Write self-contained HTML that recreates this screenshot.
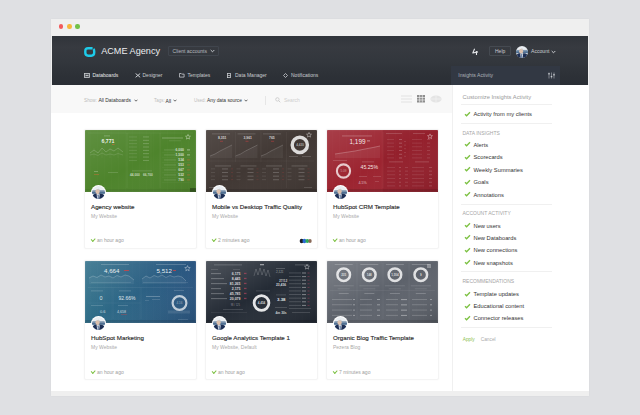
<!DOCTYPE html>
<html><head><meta charset="utf-8">
<style>
*{margin:0;padding:0;box-sizing:border-box}
html,body{width:640px;height:415px;overflow:hidden;background:#dfe0e3;font-family:"Liberation Sans",sans-serif}
.a{position:absolute}
.t{position:absolute;white-space:nowrap;line-height:1}
#win{left:51px;top:19px;width:538px;height:377px;background:#efefef;box-shadow:0 0 1.5px rgba(0,0,0,.06)}
.dot{position:absolute;width:4.4px;height:4.4px;border-radius:50%;top:24.4px}
#hdr{left:52px;top:36px;width:536px;height:49px;background:linear-gradient(#30343a 0%,#373a40 22%,#33373d 50%,#2d3137 80%,#2a2e35 100%)}
#filt{left:51px;top:85px;width:401px;height:28px;background:#f8f8f8}
#content{left:51px;top:113px;width:401px;height:278px;background:#fff}
#side{left:452px;top:85px;width:137px;height:306px;background:#fff;border-left:1px solid #f0f0f0}
#ins{left:451px;top:66px;width:109px;height:19px;background:#323843}
.nav{color:#c9ccd0;font-size:5px}
.card{position:absolute;width:113px;height:120px;background:#fff;border:1px solid #f4f4f4;border-radius:2px;box-shadow:0 0 2px rgba(0,0,0,.04)}
.thumb{position:absolute;left:0;top:0;width:111px;height:62px;border-radius:1px 1px 0 0;overflow:hidden}

.av{position:absolute;left:6px;top:55px;width:15px;height:15px;border-radius:50%;background:#fff;padding:1px}
.av svg{display:block;width:13px;height:13px}
.ct{position:absolute;left:6px;top:73.7px;font-size:6.2px;color:#2e2e2e;white-space:nowrap;line-height:1;-webkit-text-stroke:.15px #2e2e2e}
.cs{position:absolute;left:6px;top:83.5px;font-size:5px;color:#a9a9a9;white-space:nowrap;line-height:1}
.cf{position:absolute;left:6px;top:108px;font-size:5px;color:#9d9d9d;white-space:nowrap;line-height:1}
.chk{display:inline-block;width:4px;height:2.5px;border-left:1.2px solid #7cc142;border-bottom:1.2px solid #7cc142;transform:rotate(-45deg);margin-right:2px;vertical-align:1.8px}
.si{position:absolute;left:12px;font-size:5.75px;color:#333;white-space:nowrap;line-height:1}
.sl{position:absolute;left:10px;font-size:5px;color:#a0a0a0;white-space:nowrap;line-height:1}
.dv{position:absolute;left:9px;width:91px;height:1px;background:#ececec}
.sc{position:absolute;left:-1px;top:0;width:5px;height:3px;border-left:1.2px solid #7cc142;border-bottom:1.2px solid #7cc142;transform:rotate(-45deg)}
</style></head><body>
<svg width="0" height="0" style="position:absolute"><defs><clipPath id="avc"><circle cx="10" cy="10" r="10"/></clipPath>
<linearGradient id="sheen" x1="0" y1="0" x2="1" y2="1"><stop offset="0" stop-color="#fff" stop-opacity="1"/><stop offset=".5" stop-color="#fff" stop-opacity="0"/><stop offset="1" stop-color="#000" stop-opacity=".8"/></linearGradient>
<symbol id="avs" viewBox="0 0 20 20"><g clip-path="url(#avc)"><rect width="20" height="20" fill="#e9edf1"/><rect y="6.5" width="20" height="5" fill="#7f97b0"/><rect y="9" width="20" height="3" fill="#4f6f92"/><ellipse cx="8.6" cy="8.6" rx="3.3" ry="4" fill="#dcc0ad"/><path d="M8 5 Q9 3.6 11.5 4.6 L11.5 6.5 Q9.5 5.4 8 6.4Z" fill="#c9c9c9"/><path d="M0 20 L1.5 14 Q4 11.5 7 12 L9.5 16 L12 12 Q16 11.5 18.5 14 L20 20Z" fill="#1d2f55"/><path d="M7 12 L9.5 16 L12 12 L11 20 L8 20Z" fill="#e7ebf0"/><path d="M9 13 L10 13 L10.3 20 L8.8 20Z" fill="#3a5a8a"/></g></symbol></defs></svg>
<div id="win" class="a"></div>
<div class="dot" style="left:58.8px;background:#f25a5c"></div>
<div class="dot" style="left:67.2px;background:#f6b73c"></div>
<div class="dot" style="left:75.4px;background:#72c148"></div>

<div id="hdr" class="a"></div>
<!-- logo -->
<svg class="a" style="left:83px;top:45.6px" width="14" height="12" viewBox="0 0 14 12">
<path d="M9.6 2.3 H5.2 Q2.3 2.3 2.3 5.2 V6.8 Q2.3 9.7 5.2 9.7 H8.3 Q11.2 9.7 11.2 6.8 V5.2 Q11.2 3.6 10.4 3" fill="none" stroke="#1ecbe9" stroke-width="2.4"/>
</svg>
<div class="t" style="left:101.2px;top:47.4px;font-size:9.15px;color:#eceef0">ACME Agency</div>
<div class="a" style="left:168px;top:46px;width:51px;height:10px;border:1px solid #40454d;border-radius:1px"></div>
<div class="t" style="left:172.5px;top:48.5px;font-size:5.05px;color:#b6babf">Client accounts</div>
<svg class="a" style="left:210px;top:49px" width="5" height="4" viewBox="0 0 5 4"><path d="M.7 1 L2.5 2.8 L4.3 1" fill="none" stroke="#c4c7cb" stroke-width="1"/></svg>

<!-- nav -->
<div class="t nav" style="left:92.5px;top:72.9px;color:#e6e8ea">Databoards</div>
<div class="t nav" style="left:142.5px;top:72.9px">Designer</div>
<div class="t nav" style="left:187.5px;top:72.9px">Templates</div>
<div class="t nav" style="left:235px;top:72.9px">Data Manager</div>
<div class="t nav" style="left:291px;top:72.9px">Notifications</div>

<!-- header right -->
<div class="a" style="left:489px;top:46px;width:22px;height:10px;border:1px solid #454a51;border-radius:1px"></div>
<div class="t" style="left:495px;top:48.5px;font-size:5px;color:#c9ccd0">Help</div>
<svg class="a" style="left:516px;top:46px" width="12" height="12"><use href="#avs"/></svg>
<div class="t" style="left:531px;top:49.1px;font-size:5.1px;color:#c9ccd0">Account</div>
<svg class="a" style="left:550.5px;top:49.6px" width="5" height="4" viewBox="0 0 5 4"><path d="M.7 1 L2.5 2.8 L4.3 1" fill="none" stroke="#c9ccd0" stroke-width="1"/></svg>

<div id="ins" class="a"></div>
<div class="t" style="left:458.3px;top:73.4px;font-size:5.1px;color:#aeb3ba">Insights Activity</div>

<div id="filt" class="a"></div>
<div id="content" class="a"></div>
<div id="side" class="a"></div>

<!-- filter -->
<div class="t" style="left:84px;top:98.8px;font-size:4.7px;color:#bdbdbd">Show:</div>
<div class="t" style="left:98.4px;top:98.8px;font-size:4.97px;color:#333">All Databoards</div>
<div class="t" style="left:154px;top:98.8px;font-size:4.5px;color:#bdbdbd">Tags:</div>
<div class="t" style="left:165.6px;top:98.8px;font-size:5px;color:#333">All</div>
<div class="t" style="left:194px;top:98.8px;font-size:4.5px;color:#bdbdbd">Used:</div>
<div class="t" style="left:207px;top:98.8px;font-size:4.84px;color:#333">Any data source</div>
<div class="t" style="left:284px;top:98.3px;font-size:5px;color:#cfcfcf">Search</div>


<!-- nav icons -->
<svg class="a" style="left:84px;top:73.2px" width="6" height="5" viewBox="0 0 6 5"><rect x=".45" y=".45" width="5" height="4" fill="#c9ccd0" fill-opacity=".25" stroke="#c9ccd0" stroke-width=".8"/><path d="M1.6 2.5 H4.4" stroke="#d5d8db" stroke-width=".8"/></svg>
<svg class="a" style="left:134.7px;top:73.4px" width="6" height="5" viewBox="0 0 6 5"><path d="M.6 .5 L5.2 4.3 M5.2 .5 L.6 4.3" stroke="#c9ccd0" stroke-width="1"/></svg>
<svg class="a" style="left:179.2px;top:73.4px" width="6" height="5" viewBox="0 0 6 5"><path d="M.45 .5 H2.2 L2.7 1.1 H5.1 V4.1 H.45 Z" fill="none" stroke="#c9ccd0" stroke-width=".8"/></svg>
<svg class="a" style="left:227px;top:73.3px" width="4" height="5" viewBox="0 0 4 5"><rect x=".5" y=".4" width="3" height="4.2" fill="none" stroke="#c9ccd0" stroke-width=".8"/><path d="M.5 2.5 H3.5" stroke="#c9ccd0" stroke-width=".7"/></svg>
<svg class="a" style="left:282.8px;top:73.3px" width="5" height="5" viewBox="0 0 5 5"><path d="M2.5 .5 L4.5 2.5 L2.5 4.5 L.5 2.5 Z" fill="none" stroke="#c9ccd0" stroke-width=".8"/></svg>
<!-- activity icon -->
<svg class="a" style="left:471.5px;top:47.5px" width="8" height="8" viewBox="0 0 8 8"><path d="M2.6 .8 L.8 5 L6 3.9" fill="none" stroke="#e2e4e7" stroke-width="1.1" stroke-linejoin="round"/><path d="M4.4 3 L4.5 7.1" stroke="#e2e4e7" stroke-width="1.1"/></svg>
<!-- sliders icon -->
<svg class="a" style="left:547.5px;top:72px" width="7" height="7" viewBox="0 0 7 7"><path d="M1 0.5 V6.5 M3.5 0.5 V6.5 M6 0.5 V6.5" stroke="#aeb3ba" stroke-width=".6"/><rect x=".2" y="1.2" width="1.6" height="1.2" fill="#c5c9ce"/><rect x="2.7" y="4" width="1.6" height="1.2" fill="#c5c9ce"/><rect x="5.2" y="2.2" width="1.6" height="1.2" fill="#c5c9ce"/></svg>
<!-- filter chevrons -->
<svg class="a" style="left:133.8px;top:99px" width="4" height="3" viewBox="0 0 4 3"><path d="M.5 .7 L2 2.2 L3.5 .7" fill="none" stroke="#444" stroke-width=".8"/></svg>
<svg class="a" style="left:173.4px;top:99px" width="4" height="3" viewBox="0 0 4 3"><path d="M.5 .7 L2 2.2 L3.5 .7" fill="none" stroke="#444" stroke-width=".8"/></svg>
<svg class="a" style="left:243.9px;top:99px" width="4" height="3" viewBox="0 0 4 3"><path d="M.5 .7 L2 2.2 L3.5 .7" fill="none" stroke="#444" stroke-width=".8"/></svg>
<div class="a" style="left:265px;top:96px;width:1px;height:9px;background:#e6e6e6"></div>
<svg class="a" style="left:275px;top:97px" width="6" height="6" viewBox="0 0 6 6"><circle cx="2.4" cy="2.4" r="1.7" fill="none" stroke="#c8c8c8" stroke-width=".8"/><path d="M3.6 3.6 L5.3 5.3" stroke="#c8c8c8" stroke-width=".9"/></svg>
<!-- view toggles -->
<svg class="a" style="left:401px;top:95px" width="11" height="8" viewBox="0 0 11 8"><path d="M0 1 H11 M0 4 H11 M0 7 H11" stroke="#dcdcdc" stroke-width=".8"/></svg>
<svg class="a" style="left:417px;top:95px" width="8" height="7.5" viewBox="0 0 8 7.5"><rect x="0" y="0" width="8" height="7.5" fill="#8d8d8d"/><path d="M2.65 0 V7.5 M5.35 0 V7.5 M0 2.5 H8 M0 5 H8" stroke="#f8f8f8" stroke-width=".6"/></svg>
<svg class="a" style="left:429.5px;top:94.5px" width="12" height="8" viewBox="0 0 12 8"><ellipse cx="6" cy="4" rx="5.6" ry="3.5" fill="#e4e4e4"/><path d="M6 .5 V7.5 M1 4 H11" stroke="#f4f4f4" stroke-width=".7"/></svg>

<!-- cards -->
<div class="card" style="left:84px;top:129px">
  <div class="thumb"><svg width="111" height="62" viewBox="0 0 111 62" style="display:block"><rect width="111" height="62" fill="#4e842c"/><rect width="111" height="62" fill="url(#sheen)" opacity="0.1"/><g><path d="M2 0 L2 62" stroke="#fff" stroke-opacity="0.035" stroke-width="0.35"/><path d="M5.5 0 L5.5 62" stroke="#fff" stroke-opacity="0.035" stroke-width="0.35"/><path d="M9.0 0 L9.0 62" stroke="#fff" stroke-opacity="0.035" stroke-width="0.35"/><path d="M12.5 0 L12.5 62" stroke="#fff" stroke-opacity="0.035" stroke-width="0.35"/><path d="M16.0 0 L16.0 62" stroke="#fff" stroke-opacity="0.035" stroke-width="0.35"/><path d="M19.5 0 L19.5 62" stroke="#fff" stroke-opacity="0.035" stroke-width="0.35"/><path d="M23.0 0 L23.0 62" stroke="#fff" stroke-opacity="0.035" stroke-width="0.35"/><path d="M26.5 0 L26.5 62" stroke="#fff" stroke-opacity="0.035" stroke-width="0.35"/><path d="M30.0 0 L30.0 62" stroke="#fff" stroke-opacity="0.035" stroke-width="0.35"/><path d="M33.5 0 L33.5 62" stroke="#fff" stroke-opacity="0.035" stroke-width="0.35"/><path d="M37.0 0 L37.0 62" stroke="#fff" stroke-opacity="0.035" stroke-width="0.35"/><path d="M40.5 0 L40.5 62" stroke="#fff" stroke-opacity="0.035" stroke-width="0.35"/><path d="M44.0 0 L44.0 62" stroke="#fff" stroke-opacity="0.035" stroke-width="0.35"/><path d="M47.5 0 L47.5 62" stroke="#fff" stroke-opacity="0.035" stroke-width="0.35"/><path d="M51.0 0 L51.0 62" stroke="#fff" stroke-opacity="0.035" stroke-width="0.35"/><path d="M54.5 0 L54.5 62" stroke="#fff" stroke-opacity="0.035" stroke-width="0.35"/><path d="M58.0 0 L58.0 62" stroke="#fff" stroke-opacity="0.035" stroke-width="0.35"/><path d="M61.5 0 L61.5 62" stroke="#fff" stroke-opacity="0.035" stroke-width="0.35"/><path d="M65.0 0 L65.0 62" stroke="#fff" stroke-opacity="0.035" stroke-width="0.35"/><path d="M68.5 0 L68.5 62" stroke="#fff" stroke-opacity="0.035" stroke-width="0.35"/><path d="M72.0 0 L72.0 62" stroke="#fff" stroke-opacity="0.035" stroke-width="0.35"/><path d="M75.5 0 L75.5 62" stroke="#fff" stroke-opacity="0.035" stroke-width="0.35"/><path d="M79.0 0 L79.0 62" stroke="#fff" stroke-opacity="0.035" stroke-width="0.35"/><path d="M82.5 0 L82.5 62" stroke="#fff" stroke-opacity="0.035" stroke-width="0.35"/><path d="M86.0 0 L86.0 62" stroke="#fff" stroke-opacity="0.035" stroke-width="0.35"/><path d="M89.5 0 L89.5 62" stroke="#fff" stroke-opacity="0.035" stroke-width="0.35"/><path d="M93.0 0 L93.0 62" stroke="#fff" stroke-opacity="0.035" stroke-width="0.35"/><path d="M96.5 0 L96.5 62" stroke="#fff" stroke-opacity="0.035" stroke-width="0.35"/><path d="M100.0 0 L100.0 62" stroke="#fff" stroke-opacity="0.035" stroke-width="0.35"/><path d="M103.5 0 L103.5 62" stroke="#fff" stroke-opacity="0.035" stroke-width="0.35"/><path d="M107.0 0 L107.0 62" stroke="#fff" stroke-opacity="0.035" stroke-width="0.35"/><path d="M110.5 0 L110.5 62" stroke="#fff" stroke-opacity="0.035" stroke-width="0.35"/><rect x="0.8" y="0.8" width="109.4" height="60.4" fill="none" stroke="#fff" stroke-opacity="0.1" stroke-width="0.6"/><rect x="0" y="59" width="111" height="3" fill="#000" fill-opacity="0.05"/><path d="M42 3 L42 58" stroke="#fff" stroke-opacity="0.12" stroke-width="0.5"/><path d="M75 3 L75 58" stroke="#fff" stroke-opacity="0.1" stroke-width="0.5"/><path d="M3 3 L108 3" stroke="#fff" stroke-opacity="0.12" stroke-width="0.5"/><rect x="19" y="5.5" width="6" height="0.8" fill="#fff" fill-opacity="0.3"/><text x="16.5" y="13" font-family="Liberation Sans" font-size="5.2" font-weight="700" fill="#fff" fill-opacity="0.9" text-anchor="start">6,771</text><rect x="27" y="14" width="2.5" height="0.8" fill="#e36a3a" fill-opacity="0.7"/><path d="M5 23 L9 20 L13 23 L17 18 L21 22 L25 19 L29 21 L33 18 L38 22" fill="none" stroke="#fff" stroke-opacity="0.3" stroke-width="0.6"/><path d="M5 25 L9 24 L13 25.5 L17 23 L21 25 L25 24 L29 25 L33 23.5 L38 25" fill="none" stroke="#fff" stroke-opacity="0.2" stroke-width="0.6"/><path d="M9 18 L9 28" stroke="#fff" stroke-opacity="0.08" stroke-width="0.5"/><path d="M17 18 L17 28" stroke="#fff" stroke-opacity="0.08" stroke-width="0.5"/><path d="M25 18 L25 28" stroke="#fff" stroke-opacity="0.08" stroke-width="0.5"/><path d="M33 18 L33 28" stroke="#fff" stroke-opacity="0.08" stroke-width="0.5"/><rect x="44" y="6.5" width="8" height="0.9" fill="#fff" fill-opacity="0.12"/><rect x="44" y="9.85" width="8" height="0.9" fill="#fff" fill-opacity="0.12"/><rect x="44" y="13.2" width="8" height="0.9" fill="#fff" fill-opacity="0.12"/><rect x="44" y="16.55" width="8" height="0.9" fill="#fff" fill-opacity="0.12"/><rect x="44" y="19.9" width="8" height="0.9" fill="#fff" fill-opacity="0.12"/><rect x="44" y="23.25" width="8" height="0.9" fill="#fff" fill-opacity="0.12"/><rect x="44" y="26.6" width="8" height="0.9" fill="#fff" fill-opacity="0.12"/><rect x="44" y="29.95" width="8" height="0.9" fill="#fff" fill-opacity="0.12"/><rect x="58" y="6.5" width="6" height="0.9" fill="#fff" fill-opacity="0.22"/><rect x="58" y="9.85" width="6" height="0.9" fill="#fff" fill-opacity="0.22"/><rect x="58" y="13.2" width="6" height="0.9" fill="#fff" fill-opacity="0.22"/><rect x="58" y="16.55" width="6" height="0.9" fill="#fff" fill-opacity="0.22"/><rect x="58" y="19.9" width="6" height="0.9" fill="#fff" fill-opacity="0.22"/><rect x="58" y="23.25" width="6" height="0.9" fill="#fff" fill-opacity="0.22"/><rect x="58" y="26.6" width="6" height="0.9" fill="#fff" fill-opacity="0.22"/><rect x="58" y="29.95" width="6" height="0.9" fill="#fff" fill-opacity="0.22"/><path d="M66 3 L66 58" stroke="#fff" stroke-opacity="0.06" stroke-width="0.5"/><rect x="77" y="7.5" width="21" height="1" fill="#fff" fill-opacity="0.28"/><rect x="84" y="10.5" width="12" height="0.7" fill="#fff" fill-opacity="0.15"/><path d="M103.0 4.4 L103.69 6.05 L105.47 6.2 L104.11 7.36 L104.53 9.1 L103.0 8.17 L101.47 9.1 L101.89 7.36 L100.53 6.2 L102.31 6.05Z" fill="none" stroke="#fff" stroke-opacity="0.6" stroke-width="0.6"/><rect x="79" y="19.5" width="12" height="0.9" fill="#fff" fill-opacity="0.15"/><text x="99" y="21" font-family="Liberation Sans" font-size="3.4" font-weight="700" fill="#fff" fill-opacity="0.75" text-anchor="end">6,000</text><rect x="102" y="19.4" width="3" height="1" fill="#fff" fill-opacity="0.45"/><path d="M77 22.5 L106 22.5" stroke="#fff" stroke-opacity="0.06" stroke-width="0.5"/><rect x="79" y="24.5" width="12" height="0.9" fill="#fff" fill-opacity="0.15"/><text x="99" y="26" font-family="Liberation Sans" font-size="3.4" font-weight="700" fill="#fff" fill-opacity="0.75" text-anchor="end">1,500</text><rect x="102" y="24.4" width="3" height="1" fill="#fff" fill-opacity="0.45"/><path d="M77 27.5 L106 27.5" stroke="#fff" stroke-opacity="0.06" stroke-width="0.5"/><rect x="79" y="29.5" width="12" height="0.9" fill="#fff" fill-opacity="0.15"/><text x="99" y="31" font-family="Liberation Sans" font-size="3.4" font-weight="700" fill="#fff" fill-opacity="0.75" text-anchor="end">534</text><rect x="102" y="29.4" width="3" height="1" fill="#e36a3a" fill-opacity="0.45"/><path d="M77 32.5 L106 32.5" stroke="#fff" stroke-opacity="0.06" stroke-width="0.5"/><rect x="79" y="34.5" width="12" height="0.9" fill="#fff" fill-opacity="0.15"/><text x="99" y="36" font-family="Liberation Sans" font-size="3.4" font-weight="700" fill="#fff" fill-opacity="0.75" text-anchor="end">553</text><rect x="102" y="34.4" width="3" height="1" fill="#e36a3a" fill-opacity="0.45"/><path d="M77 37.5 L106 37.5" stroke="#fff" stroke-opacity="0.06" stroke-width="0.5"/><rect x="79" y="39.5" width="12" height="0.9" fill="#fff" fill-opacity="0.15"/><text x="99" y="41" font-family="Liberation Sans" font-size="3.4" font-weight="700" fill="#fff" fill-opacity="0.75" text-anchor="end">667</text><rect x="102" y="39.4" width="3" height="1" fill="#e36a3a" fill-opacity="0.45"/><path d="M77 42.5 L106 42.5" stroke="#fff" stroke-opacity="0.06" stroke-width="0.5"/><rect x="79" y="44.5" width="12" height="0.9" fill="#fff" fill-opacity="0.15"/><text x="99" y="46" font-family="Liberation Sans" font-size="3.4" font-weight="700" fill="#fff" fill-opacity="0.75" text-anchor="end">532</text><rect x="102" y="44.4" width="3" height="1" fill="#e36a3a" fill-opacity="0.45"/><path d="M77 47.5 L106 47.5" stroke="#fff" stroke-opacity="0.06" stroke-width="0.5"/><rect x="79" y="49.5" width="12" height="0.9" fill="#fff" fill-opacity="0.15"/><text x="99" y="51" font-family="Liberation Sans" font-size="3.4" font-weight="700" fill="#fff" fill-opacity="0.75" text-anchor="end">790</text><rect x="102" y="49.4" width="3" height="1" fill="#e36a3a" fill-opacity="0.45"/><path d="M77 52.5 L106 52.5" stroke="#fff" stroke-opacity="0.06" stroke-width="0.5"/><text x="45" y="45.5" font-family="Liberation Sans" font-size="3.2" font-weight="700" fill="#fff" fill-opacity="0.65" text-anchor="start">44,000</text><text x="58" y="45.5" font-family="Liberation Sans" font-size="3.2" font-weight="700" fill="#fff" fill-opacity="0.65" text-anchor="start">66,700</text><rect x="47" y="40.5" width="20" height="0.8" fill="#fff" fill-opacity="0.18"/><rect x="9" y="41" width="4" height="1" fill="#fff" fill-opacity="0.25"/><rect x="9" y="44" width="5" height="1" fill="#e36a3a" fill-opacity="0.4"/><rect x="23" y="42" width="10" height="0.8" fill="#fff" fill-opacity="0.18"/><rect x="105" y="58" width="6" height="4" fill="#000" fill-opacity="0.3"/></g></svg></div>
  <div class="av"><svg><use href="#avs"/></svg></div>
  <div class="ct">Agency website</div>
  <div class="cs">My Website</div>
  <div class="cf"><span class="chk"></span>an hour ago</div>
</div>
<div class="card" style="left:205px;top:129px">
  <div class="thumb"><svg width="111" height="62" viewBox="0 0 111 62" style="display:block"><rect width="111" height="62" fill="#413834"/><rect width="111" height="62" fill="url(#sheen)" opacity="0.1"/><g><path d="M2 0 L2 62" stroke="#fff" stroke-opacity="0.03" stroke-width="0.35"/><path d="M5.5 0 L5.5 62" stroke="#fff" stroke-opacity="0.03" stroke-width="0.35"/><path d="M9.0 0 L9.0 62" stroke="#fff" stroke-opacity="0.03" stroke-width="0.35"/><path d="M12.5 0 L12.5 62" stroke="#fff" stroke-opacity="0.03" stroke-width="0.35"/><path d="M16.0 0 L16.0 62" stroke="#fff" stroke-opacity="0.03" stroke-width="0.35"/><path d="M19.5 0 L19.5 62" stroke="#fff" stroke-opacity="0.03" stroke-width="0.35"/><path d="M23.0 0 L23.0 62" stroke="#fff" stroke-opacity="0.03" stroke-width="0.35"/><path d="M26.5 0 L26.5 62" stroke="#fff" stroke-opacity="0.03" stroke-width="0.35"/><path d="M30.0 0 L30.0 62" stroke="#fff" stroke-opacity="0.03" stroke-width="0.35"/><path d="M33.5 0 L33.5 62" stroke="#fff" stroke-opacity="0.03" stroke-width="0.35"/><path d="M37.0 0 L37.0 62" stroke="#fff" stroke-opacity="0.03" stroke-width="0.35"/><path d="M40.5 0 L40.5 62" stroke="#fff" stroke-opacity="0.03" stroke-width="0.35"/><path d="M44.0 0 L44.0 62" stroke="#fff" stroke-opacity="0.03" stroke-width="0.35"/><path d="M47.5 0 L47.5 62" stroke="#fff" stroke-opacity="0.03" stroke-width="0.35"/><path d="M51.0 0 L51.0 62" stroke="#fff" stroke-opacity="0.03" stroke-width="0.35"/><path d="M54.5 0 L54.5 62" stroke="#fff" stroke-opacity="0.03" stroke-width="0.35"/><path d="M58.0 0 L58.0 62" stroke="#fff" stroke-opacity="0.03" stroke-width="0.35"/><path d="M61.5 0 L61.5 62" stroke="#fff" stroke-opacity="0.03" stroke-width="0.35"/><path d="M65.0 0 L65.0 62" stroke="#fff" stroke-opacity="0.03" stroke-width="0.35"/><path d="M68.5 0 L68.5 62" stroke="#fff" stroke-opacity="0.03" stroke-width="0.35"/><path d="M72.0 0 L72.0 62" stroke="#fff" stroke-opacity="0.03" stroke-width="0.35"/><path d="M75.5 0 L75.5 62" stroke="#fff" stroke-opacity="0.03" stroke-width="0.35"/><path d="M79.0 0 L79.0 62" stroke="#fff" stroke-opacity="0.03" stroke-width="0.35"/><path d="M82.5 0 L82.5 62" stroke="#fff" stroke-opacity="0.03" stroke-width="0.35"/><path d="M86.0 0 L86.0 62" stroke="#fff" stroke-opacity="0.03" stroke-width="0.35"/><path d="M89.5 0 L89.5 62" stroke="#fff" stroke-opacity="0.03" stroke-width="0.35"/><path d="M93.0 0 L93.0 62" stroke="#fff" stroke-opacity="0.03" stroke-width="0.35"/><path d="M96.5 0 L96.5 62" stroke="#fff" stroke-opacity="0.03" stroke-width="0.35"/><path d="M100.0 0 L100.0 62" stroke="#fff" stroke-opacity="0.03" stroke-width="0.35"/><path d="M103.5 0 L103.5 62" stroke="#fff" stroke-opacity="0.03" stroke-width="0.35"/><path d="M107.0 0 L107.0 62" stroke="#fff" stroke-opacity="0.03" stroke-width="0.35"/><path d="M110.5 0 L110.5 62" stroke="#fff" stroke-opacity="0.03" stroke-width="0.35"/><rect x="0.8" y="0.8" width="109.4" height="60.4" fill="none" stroke="#fff" stroke-opacity="0.08" stroke-width="0.6"/><rect x="0" y="59" width="111" height="3" fill="#000" fill-opacity="0.12"/><rect x="6.0" y="3.5" width="18" height="0.8" fill="#fff" fill-opacity="0.2"/><text x="12.0" y="9.2" font-family="Liberation Sans" font-size="3.4" font-weight="700" fill="#fff" fill-opacity="0.75" text-anchor="start">8,351</text><rect x="14.0" y="10.8" width="3" height="0.9" fill="#e04040" fill-opacity="0.5"/><path d="M4.0 26 L9.0 24 L14.0 21 L19.0 18.5 L26.0 15 L26.0 28 L4.0 28Z" fill="#fff" fill-opacity="0.05"/><path d="M4.0 26 L9.0 24 L14.0 21 L19.0 18.5 L26.0 15" fill="none" stroke="#fff" stroke-opacity="0.25" stroke-width="0.7"/><rect x="31.5" y="3.5" width="18" height="0.8" fill="#fff" fill-opacity="0.2"/><text x="37.5" y="9.2" font-family="Liberation Sans" font-size="3.4" font-weight="700" fill="#fff" fill-opacity="0.75" text-anchor="start">3,961</text><rect x="39.5" y="10.8" width="3" height="0.9" fill="#e04040" fill-opacity="0.5"/><path d="M29.5 26 L34.5 24 L39.5 21 L44.5 18.5 L51.5 15 L51.5 28 L29.5 28Z" fill="#fff" fill-opacity="0.05"/><path d="M29.5 26 L34.5 24 L39.5 21 L44.5 18.5 L51.5 15" fill="none" stroke="#fff" stroke-opacity="0.25" stroke-width="0.7"/><rect x="57.0" y="3.5" width="18" height="0.8" fill="#fff" fill-opacity="0.2"/><text x="63.0" y="9.2" font-family="Liberation Sans" font-size="3.4" font-weight="700" fill="#fff" fill-opacity="0.75" text-anchor="start">765</text><rect x="65.0" y="10.8" width="3" height="0.9" fill="#e04040" fill-opacity="0.5"/><path d="M55.0 26 L60.0 24 L65.0 21 L70.0 18.5 L77.0 15 L77.0 28 L55.0 28Z" fill="#fff" fill-opacity="0.05"/><path d="M55.0 26 L60.0 24 L65.0 21 L70.0 18.5 L77.0 15" fill="none" stroke="#fff" stroke-opacity="0.25" stroke-width="0.7"/><path d="M29.5 2 L29.5 32" stroke="#fff" stroke-opacity="0.08" stroke-width="0.5"/><path d="M55 2 L55 32" stroke="#fff" stroke-opacity="0.08" stroke-width="0.5"/><path d="M80.5 2 L80.5 58" stroke="#fff" stroke-opacity="0.08" stroke-width="0.5"/><path d="M3 31 L108 31" stroke="#fff" stroke-opacity="0.08" stroke-width="0.5"/><circle cx="93.8" cy="14.9" r="7.6" fill="none" stroke="#fff" stroke-opacity="0.82" stroke-width="3.4"/><text x="94" y="16" font-family="Liberation Sans" font-size="3.1" font-weight="700" fill="#fff" fill-opacity="0.55" text-anchor="middle">4,430</text><path d="M103.0 2.4 L103.69 4.05 L105.47 4.2 L104.11 5.36 L104.53 7.1 L103.0 6.17 L101.47 7.1 L101.89 5.36 L100.53 4.2 L102.31 4.05Z" fill="none" stroke="#fff" stroke-opacity="0.6" stroke-width="0.6"/><rect x="83" y="26" width="9" height="0.8" fill="#fff" fill-opacity="0.2"/><rect x="96" y="26" width="9" height="0.8" fill="#fff" fill-opacity="0.2"/><rect x="9.0" y="35.5" width="16" height="0.9" fill="#fff" fill-opacity="0.2"/><rect x="5.0" y="38.5" width="4" height="0.8" fill="#fff" fill-opacity="0.12"/><rect x="5.0" y="42.1" width="4" height="0.8" fill="#fff" fill-opacity="0.12"/><rect x="5.0" y="45.7" width="4" height="0.8" fill="#fff" fill-opacity="0.12"/><rect x="5.0" y="49.3" width="4" height="0.8" fill="#fff" fill-opacity="0.12"/><rect x="16.0" y="38.5" width="6" height="0.9" fill="#fff" fill-opacity="0.22"/><rect x="16.0" y="42.1" width="6" height="0.9" fill="#fff" fill-opacity="0.22"/><rect x="16.0" y="45.7" width="6" height="0.9" fill="#fff" fill-opacity="0.22"/><rect x="16.0" y="49.3" width="6" height="0.9" fill="#fff" fill-opacity="0.22"/><rect x="25.0" y="38.5" width="2" height="0.8" fill="#e04040" fill-opacity="0.2"/><rect x="25.0" y="42.1" width="2" height="0.8" fill="#e04040" fill-opacity="0.2"/><rect x="25.0" y="45.7" width="2" height="0.8" fill="#e04040" fill-opacity="0.2"/><rect x="25.0" y="49.3" width="2" height="0.8" fill="#e04040" fill-opacity="0.2"/><rect x="34.5" y="35.5" width="16" height="0.9" fill="#fff" fill-opacity="0.2"/><rect x="30.5" y="38.5" width="4" height="0.8" fill="#fff" fill-opacity="0.12"/><rect x="30.5" y="42.1" width="4" height="0.8" fill="#fff" fill-opacity="0.12"/><rect x="30.5" y="45.7" width="4" height="0.8" fill="#fff" fill-opacity="0.12"/><rect x="30.5" y="49.3" width="4" height="0.8" fill="#fff" fill-opacity="0.12"/><rect x="41.5" y="38.5" width="6" height="0.9" fill="#fff" fill-opacity="0.22"/><rect x="41.5" y="42.1" width="6" height="0.9" fill="#fff" fill-opacity="0.22"/><rect x="41.5" y="45.7" width="6" height="0.9" fill="#fff" fill-opacity="0.22"/><rect x="41.5" y="49.3" width="6" height="0.9" fill="#fff" fill-opacity="0.22"/><rect x="50.5" y="38.5" width="2" height="0.8" fill="#e04040" fill-opacity="0.2"/><rect x="50.5" y="42.1" width="2" height="0.8" fill="#e04040" fill-opacity="0.2"/><rect x="50.5" y="45.7" width="2" height="0.8" fill="#e04040" fill-opacity="0.2"/><rect x="50.5" y="49.3" width="2" height="0.8" fill="#e04040" fill-opacity="0.2"/><rect x="60.0" y="35.5" width="16" height="0.9" fill="#fff" fill-opacity="0.2"/><rect x="56.0" y="38.5" width="4" height="0.8" fill="#fff" fill-opacity="0.12"/><rect x="56.0" y="42.1" width="4" height="0.8" fill="#fff" fill-opacity="0.12"/><rect x="56.0" y="45.7" width="4" height="0.8" fill="#fff" fill-opacity="0.12"/><rect x="56.0" y="49.3" width="4" height="0.8" fill="#fff" fill-opacity="0.12"/><rect x="67.0" y="38.5" width="6" height="0.9" fill="#fff" fill-opacity="0.22"/><rect x="67.0" y="42.1" width="6" height="0.9" fill="#fff" fill-opacity="0.22"/><rect x="67.0" y="45.7" width="6" height="0.9" fill="#fff" fill-opacity="0.22"/><rect x="67.0" y="49.3" width="6" height="0.9" fill="#fff" fill-opacity="0.22"/><rect x="76.0" y="38.5" width="2" height="0.8" fill="#e04040" fill-opacity="0.2"/><rect x="76.0" y="42.1" width="2" height="0.8" fill="#e04040" fill-opacity="0.2"/><rect x="76.0" y="45.7" width="2" height="0.8" fill="#e04040" fill-opacity="0.2"/><rect x="76.0" y="49.3" width="2" height="0.8" fill="#e04040" fill-opacity="0.2"/><rect x="85.5" y="35.5" width="16" height="0.9" fill="#fff" fill-opacity="0.2"/><rect x="81.5" y="38.5" width="4" height="0.8" fill="#fff" fill-opacity="0.12"/><rect x="81.5" y="42.1" width="4" height="0.8" fill="#fff" fill-opacity="0.12"/><rect x="81.5" y="45.7" width="4" height="0.8" fill="#fff" fill-opacity="0.12"/><rect x="81.5" y="49.3" width="4" height="0.8" fill="#fff" fill-opacity="0.12"/><rect x="92.5" y="38.5" width="6" height="0.9" fill="#fff" fill-opacity="0.22"/><rect x="92.5" y="42.1" width="6" height="0.9" fill="#fff" fill-opacity="0.22"/><rect x="92.5" y="45.7" width="6" height="0.9" fill="#fff" fill-opacity="0.22"/><rect x="92.5" y="49.3" width="6" height="0.9" fill="#fff" fill-opacity="0.22"/><rect x="101.5" y="38.5" width="2" height="0.8" fill="#e04040" fill-opacity="0.2"/><rect x="101.5" y="42.1" width="2" height="0.8" fill="#e04040" fill-opacity="0.2"/><rect x="101.5" y="45.7" width="2" height="0.8" fill="#e04040" fill-opacity="0.2"/><rect x="101.5" y="49.3" width="2" height="0.8" fill="#e04040" fill-opacity="0.2"/><rect x="3" y="57" width="6" height="0.8" fill="#fff" fill-opacity="0.2"/><rect x="98" y="57" width="8" height="0.8" fill="#fff" fill-opacity="0.18"/></g></svg></div>
  <div class="av"><svg><use href="#avs"/></svg></div>
  <div class="ct">Mobile vs Desktop Traffic Quality</div>
  <div class="cs">My Website</div>
  <div class="cf"><span class="chk"></span>2 minutes ago</div>
  <svg class="a" style="left:93px;top:108px" width="14" height="6" viewBox="0 0 14 6"><ellipse cx="2.6" cy="3" rx="1.9" ry="2.3" fill="#1b1f2a"/><ellipse cx="5.4" cy="3" rx="1.9" ry="2.2" fill="#2a6ad8"/><ellipse cx="8.3" cy="3" rx="1.9" ry="2.1" fill="#2fae5a"/><ellipse cx="11" cy="3" rx="1.7" ry="1.9" fill="#8a6a5a"/></svg>
</div>
<div class="card" style="left:326px;top:129px">
  <div class="thumb"><svg width="111" height="62" viewBox="0 0 111 62" style="display:block"><rect width="111" height="62" fill="#9c2430"/><rect width="111" height="62" fill="url(#sheen)" opacity="0.12"/><g><path d="M2 0 L2 62" stroke="#fff" stroke-opacity="0.035" stroke-width="0.35"/><path d="M5.5 0 L5.5 62" stroke="#fff" stroke-opacity="0.035" stroke-width="0.35"/><path d="M9.0 0 L9.0 62" stroke="#fff" stroke-opacity="0.035" stroke-width="0.35"/><path d="M12.5 0 L12.5 62" stroke="#fff" stroke-opacity="0.035" stroke-width="0.35"/><path d="M16.0 0 L16.0 62" stroke="#fff" stroke-opacity="0.035" stroke-width="0.35"/><path d="M19.5 0 L19.5 62" stroke="#fff" stroke-opacity="0.035" stroke-width="0.35"/><path d="M23.0 0 L23.0 62" stroke="#fff" stroke-opacity="0.035" stroke-width="0.35"/><path d="M26.5 0 L26.5 62" stroke="#fff" stroke-opacity="0.035" stroke-width="0.35"/><path d="M30.0 0 L30.0 62" stroke="#fff" stroke-opacity="0.035" stroke-width="0.35"/><path d="M33.5 0 L33.5 62" stroke="#fff" stroke-opacity="0.035" stroke-width="0.35"/><path d="M37.0 0 L37.0 62" stroke="#fff" stroke-opacity="0.035" stroke-width="0.35"/><path d="M40.5 0 L40.5 62" stroke="#fff" stroke-opacity="0.035" stroke-width="0.35"/><path d="M44.0 0 L44.0 62" stroke="#fff" stroke-opacity="0.035" stroke-width="0.35"/><path d="M47.5 0 L47.5 62" stroke="#fff" stroke-opacity="0.035" stroke-width="0.35"/><path d="M51.0 0 L51.0 62" stroke="#fff" stroke-opacity="0.035" stroke-width="0.35"/><path d="M54.5 0 L54.5 62" stroke="#fff" stroke-opacity="0.035" stroke-width="0.35"/><path d="M58.0 0 L58.0 62" stroke="#fff" stroke-opacity="0.035" stroke-width="0.35"/><path d="M61.5 0 L61.5 62" stroke="#fff" stroke-opacity="0.035" stroke-width="0.35"/><path d="M65.0 0 L65.0 62" stroke="#fff" stroke-opacity="0.035" stroke-width="0.35"/><path d="M68.5 0 L68.5 62" stroke="#fff" stroke-opacity="0.035" stroke-width="0.35"/><path d="M72.0 0 L72.0 62" stroke="#fff" stroke-opacity="0.035" stroke-width="0.35"/><path d="M75.5 0 L75.5 62" stroke="#fff" stroke-opacity="0.035" stroke-width="0.35"/><path d="M79.0 0 L79.0 62" stroke="#fff" stroke-opacity="0.035" stroke-width="0.35"/><path d="M82.5 0 L82.5 62" stroke="#fff" stroke-opacity="0.035" stroke-width="0.35"/><path d="M86.0 0 L86.0 62" stroke="#fff" stroke-opacity="0.035" stroke-width="0.35"/><path d="M89.5 0 L89.5 62" stroke="#fff" stroke-opacity="0.035" stroke-width="0.35"/><path d="M93.0 0 L93.0 62" stroke="#fff" stroke-opacity="0.035" stroke-width="0.35"/><path d="M96.5 0 L96.5 62" stroke="#fff" stroke-opacity="0.035" stroke-width="0.35"/><path d="M100.0 0 L100.0 62" stroke="#fff" stroke-opacity="0.035" stroke-width="0.35"/><path d="M103.5 0 L103.5 62" stroke="#fff" stroke-opacity="0.035" stroke-width="0.35"/><path d="M107.0 0 L107.0 62" stroke="#fff" stroke-opacity="0.035" stroke-width="0.35"/><path d="M110.5 0 L110.5 62" stroke="#fff" stroke-opacity="0.035" stroke-width="0.35"/><rect x="0.8" y="0.8" width="109.4" height="60.4" fill="none" stroke="#fff" stroke-opacity="0.1" stroke-width="0.6"/><rect x="0" y="59" width="111" height="3" fill="#000" fill-opacity="0.12"/><rect x="56" y="0" width="55" height="62" fill="#6a0f18" fill-opacity="0.15"/><rect x="15" y="5.5" width="30" height="0.9" fill="#fff" fill-opacity="0.28"/><text x="22.5" y="13.5" font-family="Liberation Sans" font-size="6.4" font-weight="400" fill="#fff" fill-opacity="0.9" text-anchor="start">1,199</text><rect x="40" y="10.5" width="3" height="0.8" fill="#fff" fill-opacity="0.6"/><path d="M8 24 L18 22.5 L28 21 L38 19 L46 17.5 L53 16 L53 28 L8 28Z" fill="#fff" fill-opacity="0.06"/><path d="M8 24 L18 22.5 L28 21 L38 19 L46 17.5 L53 16" fill="none" stroke="#fff" stroke-opacity="0.35" stroke-width="0.7"/><rect x="6" y="30" width="14" height="0.8" fill="#fff" fill-opacity="0.2"/><circle cx="16.5" cy="41" r="6.6" fill="none" stroke="#fff" stroke-opacity="0.75" stroke-width="2.1"/><text x="16.5" y="42.2" font-family="Liberation Sans" font-size="3" font-weight="400" fill="#fff" fill-opacity="0.5" text-anchor="middle">5.09</text><rect x="35" y="31.5" width="12" height="0.8" fill="#fff" fill-opacity="0.22"/><text x="33.5" y="39.3" font-family="Liberation Sans" font-size="5.2" font-weight="400" fill="#fff" fill-opacity="0.9" text-anchor="start">45.25%</text><rect x="32" y="46" width="8" height="0.8" fill="#fff" fill-opacity="0.2"/><text x="31.5" y="53.5" font-family="Liberation Sans" font-size="3.6" font-weight="400" fill="#fff" fill-opacity="0.7" text-anchor="start">4.5%</text><rect x="46" y="46" width="8" height="0.8" fill="#fff" fill-opacity="0.18"/><rect x="48" y="51" width="4" height="0.8" fill="#fff" fill-opacity="0.18"/><path d="M56 2 L56 58" stroke="#fff" stroke-opacity="0.1" stroke-width="0.5"/><rect x="59" y="3" width="16" height="0.8" fill="#fff" fill-opacity="0.2"/><rect x="86" y="3" width="12" height="0.8" fill="#fff" fill-opacity="0.2"/><path d="M103.0 3.9 L103.69 5.55 L105.47 5.7 L104.11 6.86 L104.53 8.6 L103.0 7.67 L101.47 8.6 L101.89 6.86 L100.53 5.7 L102.31 5.55Z" fill="none" stroke="#fff" stroke-opacity="0.6" stroke-width="0.6"/><rect x="60" y="9.0" width="7" height="0.8" fill="#fff" fill-opacity="0.13"/><rect x="60" y="12.7" width="7" height="0.8" fill="#fff" fill-opacity="0.13"/><rect x="60" y="16.4" width="7" height="0.8" fill="#fff" fill-opacity="0.13"/><rect x="60" y="20.1" width="7" height="0.8" fill="#fff" fill-opacity="0.13"/><rect x="60" y="23.8" width="7" height="0.8" fill="#fff" fill-opacity="0.13"/><rect x="60" y="27.5" width="7" height="0.8" fill="#fff" fill-opacity="0.13"/><rect x="72" y="9.0" width="3" height="0.9" fill="#fff" fill-opacity="0.25"/><rect x="72" y="12.7" width="3" height="0.9" fill="#fff" fill-opacity="0.25"/><rect x="72" y="16.4" width="3" height="0.9" fill="#fff" fill-opacity="0.25"/><rect x="72" y="20.1" width="3" height="0.9" fill="#fff" fill-opacity="0.25"/><rect x="72" y="23.8" width="3" height="0.9" fill="#fff" fill-opacity="0.25"/><rect x="72" y="27.5" width="3" height="0.9" fill="#fff" fill-opacity="0.25"/><rect x="77" y="11.0" width="2" height="0.8" fill="#fff" fill-opacity="0.15"/><rect x="77" y="14.7" width="2" height="0.8" fill="#fff" fill-opacity="0.15"/><rect x="77" y="18.4" width="2" height="0.8" fill="#fff" fill-opacity="0.15"/><rect x="77" y="22.1" width="2" height="0.8" fill="#fff" fill-opacity="0.15"/><rect x="77" y="25.8" width="2" height="0.8" fill="#fff" fill-opacity="0.15"/><rect x="85" y="9.0" width="10" height="0.8" fill="#fff" fill-opacity="0.13"/><rect x="85" y="12.7" width="10" height="0.8" fill="#fff" fill-opacity="0.13"/><rect x="85" y="16.4" width="10" height="0.8" fill="#fff" fill-opacity="0.13"/><rect x="85" y="20.1" width="10" height="0.8" fill="#fff" fill-opacity="0.13"/><rect x="85" y="23.8" width="10" height="0.8" fill="#fff" fill-opacity="0.13"/><rect x="85" y="27.5" width="10" height="0.8" fill="#fff" fill-opacity="0.13"/><rect x="100" y="9.0" width="3" height="0.8" fill="#fff" fill-opacity="0.17"/><rect x="100" y="12.7" width="3" height="0.8" fill="#fff" fill-opacity="0.17"/><rect x="100" y="16.4" width="3" height="0.8" fill="#fff" fill-opacity="0.17"/><rect x="100" y="20.1" width="3" height="0.8" fill="#fff" fill-opacity="0.17"/><rect x="100" y="23.8" width="3" height="0.8" fill="#fff" fill-opacity="0.17"/><rect x="100" y="27.5" width="3" height="0.8" fill="#fff" fill-opacity="0.17"/><rect x="62" y="31.5" width="14" height="0.8" fill="#fff" fill-opacity="0.22"/><rect x="88" y="31.5" width="14" height="0.8" fill="#fff" fill-opacity="0.22"/><rect x="60" y="37.0" width="8" height="0.8" fill="#fff" fill-opacity="0.13"/><rect x="60" y="40.7" width="8" height="0.8" fill="#fff" fill-opacity="0.13"/><rect x="60" y="44.4" width="8" height="0.8" fill="#fff" fill-opacity="0.13"/><rect x="60" y="48.1" width="8" height="0.8" fill="#fff" fill-opacity="0.13"/><rect x="60" y="51.8" width="8" height="0.8" fill="#fff" fill-opacity="0.13"/><rect x="60" y="55.5" width="8" height="0.8" fill="#fff" fill-opacity="0.13"/><rect x="72" y="37.0" width="2" height="0.8" fill="#fff" fill-opacity="0.22"/><rect x="72" y="40.7" width="2" height="0.8" fill="#fff" fill-opacity="0.22"/><rect x="72" y="44.4" width="2" height="0.8" fill="#fff" fill-opacity="0.22"/><rect x="72" y="48.1" width="2" height="0.8" fill="#fff" fill-opacity="0.22"/><rect x="72" y="51.8" width="2" height="0.8" fill="#fff" fill-opacity="0.22"/><rect x="72" y="55.5" width="2" height="0.8" fill="#fff" fill-opacity="0.22"/><rect x="78" y="37.0" width="3" height="0.8" fill="#fff" fill-opacity="0.16"/><rect x="78" y="40.7" width="3" height="0.8" fill="#fff" fill-opacity="0.16"/><rect x="78" y="44.4" width="3" height="0.8" fill="#fff" fill-opacity="0.16"/><rect x="78" y="48.1" width="3" height="0.8" fill="#fff" fill-opacity="0.16"/><rect x="78" y="51.8" width="3" height="0.8" fill="#fff" fill-opacity="0.16"/><rect x="78" y="55.5" width="3" height="0.8" fill="#fff" fill-opacity="0.16"/><rect x="85" y="37.0" width="12" height="0.8" fill="#fff" fill-opacity="0.13"/><rect x="85" y="40.7" width="12" height="0.8" fill="#fff" fill-opacity="0.13"/><rect x="85" y="44.4" width="12" height="0.8" fill="#fff" fill-opacity="0.13"/><rect x="85" y="48.1" width="12" height="0.8" fill="#fff" fill-opacity="0.13"/><rect x="85" y="51.8" width="12" height="0.8" fill="#fff" fill-opacity="0.13"/><rect x="85" y="55.5" width="12" height="0.8" fill="#fff" fill-opacity="0.13"/><rect x="102" y="37.0" width="3" height="0.8" fill="#fff" fill-opacity="0.22"/><rect x="102" y="40.7" width="3" height="0.8" fill="#fff" fill-opacity="0.22"/><rect x="102" y="44.4" width="3" height="0.8" fill="#fff" fill-opacity="0.22"/><rect x="102" y="48.1" width="3" height="0.8" fill="#fff" fill-opacity="0.22"/><rect x="102" y="51.8" width="3" height="0.8" fill="#fff" fill-opacity="0.22"/><rect x="102" y="55.5" width="3" height="0.8" fill="#fff" fill-opacity="0.22"/></g></svg></div>
  <div class="av"><svg><use href="#avs"/></svg></div>
  <div class="ct">HubSpot CRM Template</div>
  <div class="cs">My Website</div>
  <div class="cf"><span class="chk"></span>an hour ago</div>
</div>
<div class="card" style="left:84px;top:260px">
  <div class="thumb"><svg width="111" height="62" viewBox="0 0 111 62" style="display:block"><defs><linearGradient id="g4" x1="0" x2="1"><stop offset="0" stop-color="#2f6e88"/><stop offset="1" stop-color="#2a5580"/></linearGradient></defs><rect width="111" height="62" fill="url(#g4)"/><rect width="111" height="62" fill="url(#sheen)" opacity="0.12"/><g><path d="M2 0 L2 62" stroke="#fff" stroke-opacity="0.035" stroke-width="0.35"/><path d="M5.5 0 L5.5 62" stroke="#fff" stroke-opacity="0.035" stroke-width="0.35"/><path d="M9.0 0 L9.0 62" stroke="#fff" stroke-opacity="0.035" stroke-width="0.35"/><path d="M12.5 0 L12.5 62" stroke="#fff" stroke-opacity="0.035" stroke-width="0.35"/><path d="M16.0 0 L16.0 62" stroke="#fff" stroke-opacity="0.035" stroke-width="0.35"/><path d="M19.5 0 L19.5 62" stroke="#fff" stroke-opacity="0.035" stroke-width="0.35"/><path d="M23.0 0 L23.0 62" stroke="#fff" stroke-opacity="0.035" stroke-width="0.35"/><path d="M26.5 0 L26.5 62" stroke="#fff" stroke-opacity="0.035" stroke-width="0.35"/><path d="M30.0 0 L30.0 62" stroke="#fff" stroke-opacity="0.035" stroke-width="0.35"/><path d="M33.5 0 L33.5 62" stroke="#fff" stroke-opacity="0.035" stroke-width="0.35"/><path d="M37.0 0 L37.0 62" stroke="#fff" stroke-opacity="0.035" stroke-width="0.35"/><path d="M40.5 0 L40.5 62" stroke="#fff" stroke-opacity="0.035" stroke-width="0.35"/><path d="M44.0 0 L44.0 62" stroke="#fff" stroke-opacity="0.035" stroke-width="0.35"/><path d="M47.5 0 L47.5 62" stroke="#fff" stroke-opacity="0.035" stroke-width="0.35"/><path d="M51.0 0 L51.0 62" stroke="#fff" stroke-opacity="0.035" stroke-width="0.35"/><path d="M54.5 0 L54.5 62" stroke="#fff" stroke-opacity="0.035" stroke-width="0.35"/><path d="M58.0 0 L58.0 62" stroke="#fff" stroke-opacity="0.035" stroke-width="0.35"/><path d="M61.5 0 L61.5 62" stroke="#fff" stroke-opacity="0.035" stroke-width="0.35"/><path d="M65.0 0 L65.0 62" stroke="#fff" stroke-opacity="0.035" stroke-width="0.35"/><path d="M68.5 0 L68.5 62" stroke="#fff" stroke-opacity="0.035" stroke-width="0.35"/><path d="M72.0 0 L72.0 62" stroke="#fff" stroke-opacity="0.035" stroke-width="0.35"/><path d="M75.5 0 L75.5 62" stroke="#fff" stroke-opacity="0.035" stroke-width="0.35"/><path d="M79.0 0 L79.0 62" stroke="#fff" stroke-opacity="0.035" stroke-width="0.35"/><path d="M82.5 0 L82.5 62" stroke="#fff" stroke-opacity="0.035" stroke-width="0.35"/><path d="M86.0 0 L86.0 62" stroke="#fff" stroke-opacity="0.035" stroke-width="0.35"/><path d="M89.5 0 L89.5 62" stroke="#fff" stroke-opacity="0.035" stroke-width="0.35"/><path d="M93.0 0 L93.0 62" stroke="#fff" stroke-opacity="0.035" stroke-width="0.35"/><path d="M96.5 0 L96.5 62" stroke="#fff" stroke-opacity="0.035" stroke-width="0.35"/><path d="M100.0 0 L100.0 62" stroke="#fff" stroke-opacity="0.035" stroke-width="0.35"/><path d="M103.5 0 L103.5 62" stroke="#fff" stroke-opacity="0.035" stroke-width="0.35"/><path d="M107.0 0 L107.0 62" stroke="#fff" stroke-opacity="0.035" stroke-width="0.35"/><path d="M110.5 0 L110.5 62" stroke="#fff" stroke-opacity="0.035" stroke-width="0.35"/><rect x="0.8" y="0.8" width="109.4" height="60.4" fill="none" stroke="#fff" stroke-opacity="0.12" stroke-width="0.6"/><rect x="0" y="59" width="111" height="3" fill="#000" fill-opacity="0.1"/><rect x="16" y="3" width="28" height="0.8" fill="#fff" fill-opacity="0.25"/><text x="19" y="12" font-family="Liberation Sans" font-size="6.2" font-weight="400" fill="#fff" fill-opacity="0.9" text-anchor="start">4,664</text><rect x="39" y="9" width="5" height="0.9" fill="#e04040" fill-opacity="0.8"/><rect x="71" y="3" width="30" height="0.8" fill="#fff" fill-opacity="0.25"/><text x="71.5" y="12" font-family="Liberation Sans" font-size="6.2" font-weight="400" fill="#fff" fill-opacity="0.9" text-anchor="start">5,512</text><rect x="88" y="9" width="3" height="0.9" fill="#e04040" fill-opacity="0.8"/><path d="M102.5 4.6 L103.27 6.44 L105.26 6.6 L103.74 7.9 L104.2 9.85 L102.5 8.8 L100.8 9.85 L101.26 7.9 L99.74 6.6 L101.73 6.44Z" fill="none" stroke="#fff" stroke-opacity="0.6" stroke-width="0.6"/><path d="M4 17 L8 15 L12 16.5 L16 14 L20 16 L24 15 L28 17 L32 14.5 L36 16 L40 14 L44 15 L49 19 L49 23 L4 23Z" fill="#fff" fill-opacity="0.05"/><path d="M4 17 L8 15 L12 16.5 L16 14 L20 16 L24 15 L28 17 L32 14.5 L36 16 L40 14 L44 15 L49 19" fill="none" stroke="#fff" stroke-opacity="0.35" stroke-width="0.6"/><path d="M57 18 L61 15 L65 17 L69 14.5 L73 16 L77 14 L81 16.5 L85 14.5 L89 16 L93 15 L97 16 L101 20 L101 23 L57 23Z" fill="#fff" fill-opacity="0.05"/><path d="M57 18 L61 15 L65 17 L69 14.5 L73 16 L77 14 L81 16.5 L85 14.5 L89 16 L93 15 L97 16 L101 20" fill="none" stroke="#fff" stroke-opacity="0.35" stroke-width="0.6"/><rect x="6" y="21" width="40" height="1.1" fill="#fff" fill-opacity="0.1"/><rect x="58" y="21" width="45" height="1.1" fill="#fff" fill-opacity="0.1"/><path d="M3 26.5 L108 26.5" stroke="#fff" stroke-opacity="0.12" stroke-width="0.5"/><path d="M56 26.5 L56 58" stroke="#fff" stroke-opacity="0.1" stroke-width="0.5"/><path d="M28 26.5 L28 58" stroke="#fff" stroke-opacity="0.08" stroke-width="0.5"/><path d="M3 42 L56 42" stroke="#fff" stroke-opacity="0.08" stroke-width="0.5"/><rect x="6" y="29.5" width="12" height="0.8" fill="#fff" fill-opacity="0.22"/><text x="14.5" y="39" font-family="Liberation Sans" font-size="5.4" font-weight="400" fill="#fff" fill-opacity="0.85" text-anchor="start">0</text><rect x="34" y="29.5" width="12" height="0.8" fill="#fff" fill-opacity="0.22"/><text x="33.5" y="38.5" font-family="Liberation Sans" font-size="5" font-weight="400" fill="#fff" fill-opacity="0.88" text-anchor="start">92.66%</text><rect x="6" y="44" width="12" height="0.8" fill="#fff" fill-opacity="0.2"/><text x="15" y="52" font-family="Liberation Sans" font-size="4" font-weight="400" fill="#fff" fill-opacity="0.75" text-anchor="start">0.6</text><rect x="33" y="44" width="10" height="0.8" fill="#fff" fill-opacity="0.2"/><text x="32" y="51.5" font-family="Liberation Sans" font-size="3.6" font-weight="400" fill="#fff" fill-opacity="0.75" text-anchor="start">4,658</text><rect x="36" y="53" width="6" height="0.8" fill="#e04040" fill-opacity="0.4"/><rect x="61" y="35" width="14" height="1" fill="#fff" fill-opacity="0.25"/><rect x="67" y="38" width="8" height="0.8" fill="#fff" fill-opacity="0.18"/><rect x="60" y="39" width="4" height="0.8" fill="#fff" fill-opacity="0.15"/><rect x="89" y="29" width="10" height="0.8" fill="#fff" fill-opacity="0.2"/><circle cx="94.5" cy="42" r="6.9" fill="none" stroke="#fff" stroke-opacity="0.7" stroke-width="2.2"/><text x="94.5" y="43.2" font-family="Liberation Sans" font-size="3" font-weight="400" fill="#fff" fill-opacity="0.5" text-anchor="middle">4.16</text><rect x="83" y="49.5" width="22" height="3" fill="#fff" fill-opacity="0.1"/><rect x="93" y="58" width="10" height="0.7" fill="#fff" fill-opacity="0.18"/></g></svg></div>
  <div class="av"><svg><use href="#avs"/></svg></div>
  <div class="ct">HubSpot Marketing</div>
  <div class="cs">My Website</div>
  <div class="cf" style="top:109px"><span class="chk"></span>an hour ago</div>
</div>
<div class="card" style="left:205px;top:260px">
  <div class="thumb"><svg width="111" height="62" viewBox="0 0 111 62" style="display:block"><rect width="111" height="62" fill="#242b35"/><rect width="111" height="62" fill="url(#sheen)" opacity="0.2"/><g><path d="M2 0 L2 62" stroke="#fff" stroke-opacity="0.03" stroke-width="0.35"/><path d="M5.5 0 L5.5 62" stroke="#fff" stroke-opacity="0.03" stroke-width="0.35"/><path d="M9.0 0 L9.0 62" stroke="#fff" stroke-opacity="0.03" stroke-width="0.35"/><path d="M12.5 0 L12.5 62" stroke="#fff" stroke-opacity="0.03" stroke-width="0.35"/><path d="M16.0 0 L16.0 62" stroke="#fff" stroke-opacity="0.03" stroke-width="0.35"/><path d="M19.5 0 L19.5 62" stroke="#fff" stroke-opacity="0.03" stroke-width="0.35"/><path d="M23.0 0 L23.0 62" stroke="#fff" stroke-opacity="0.03" stroke-width="0.35"/><path d="M26.5 0 L26.5 62" stroke="#fff" stroke-opacity="0.03" stroke-width="0.35"/><path d="M30.0 0 L30.0 62" stroke="#fff" stroke-opacity="0.03" stroke-width="0.35"/><path d="M33.5 0 L33.5 62" stroke="#fff" stroke-opacity="0.03" stroke-width="0.35"/><path d="M37.0 0 L37.0 62" stroke="#fff" stroke-opacity="0.03" stroke-width="0.35"/><path d="M40.5 0 L40.5 62" stroke="#fff" stroke-opacity="0.03" stroke-width="0.35"/><path d="M44.0 0 L44.0 62" stroke="#fff" stroke-opacity="0.03" stroke-width="0.35"/><path d="M47.5 0 L47.5 62" stroke="#fff" stroke-opacity="0.03" stroke-width="0.35"/><path d="M51.0 0 L51.0 62" stroke="#fff" stroke-opacity="0.03" stroke-width="0.35"/><path d="M54.5 0 L54.5 62" stroke="#fff" stroke-opacity="0.03" stroke-width="0.35"/><path d="M58.0 0 L58.0 62" stroke="#fff" stroke-opacity="0.03" stroke-width="0.35"/><path d="M61.5 0 L61.5 62" stroke="#fff" stroke-opacity="0.03" stroke-width="0.35"/><path d="M65.0 0 L65.0 62" stroke="#fff" stroke-opacity="0.03" stroke-width="0.35"/><path d="M68.5 0 L68.5 62" stroke="#fff" stroke-opacity="0.03" stroke-width="0.35"/><path d="M72.0 0 L72.0 62" stroke="#fff" stroke-opacity="0.03" stroke-width="0.35"/><path d="M75.5 0 L75.5 62" stroke="#fff" stroke-opacity="0.03" stroke-width="0.35"/><path d="M79.0 0 L79.0 62" stroke="#fff" stroke-opacity="0.03" stroke-width="0.35"/><path d="M82.5 0 L82.5 62" stroke="#fff" stroke-opacity="0.03" stroke-width="0.35"/><path d="M86.0 0 L86.0 62" stroke="#fff" stroke-opacity="0.03" stroke-width="0.35"/><path d="M89.5 0 L89.5 62" stroke="#fff" stroke-opacity="0.03" stroke-width="0.35"/><path d="M93.0 0 L93.0 62" stroke="#fff" stroke-opacity="0.03" stroke-width="0.35"/><path d="M96.5 0 L96.5 62" stroke="#fff" stroke-opacity="0.03" stroke-width="0.35"/><path d="M100.0 0 L100.0 62" stroke="#fff" stroke-opacity="0.03" stroke-width="0.35"/><path d="M103.5 0 L103.5 62" stroke="#fff" stroke-opacity="0.03" stroke-width="0.35"/><path d="M107.0 0 L107.0 62" stroke="#fff" stroke-opacity="0.03" stroke-width="0.35"/><path d="M110.5 0 L110.5 62" stroke="#fff" stroke-opacity="0.03" stroke-width="0.35"/><rect x="0.8" y="0.8" width="109.4" height="60.4" fill="none" stroke="#fff" stroke-opacity="0.08" stroke-width="0.6"/><rect x="0" y="59" width="111" height="3" fill="#000" fill-opacity="0.1"/><rect x="8" y="3.5" width="28" height="0.8" fill="#fff" fill-opacity="0.25"/><rect x="5" y="8" width="7" height="0.7" fill="#fff" fill-opacity="0.18"/><rect x="27" y="8" width="7" height="0.7" fill="#fff" fill-opacity="0.18"/><rect x="5" y="12.2" width="10" height="0.9" fill="#fff" fill-opacity="0.3"/><text x="34.5" y="13.5" font-family="Liberation Sans" font-size="3.5" font-weight="700" fill="#fff" fill-opacity="0.8" text-anchor="end">6,175</text><rect x="38" y="11.8" width="2.5" height="1.3" fill="#e04a6a" fill-opacity="0.5"/><rect x="5" y="17.2" width="13" height="0.9" fill="#fff" fill-opacity="0.3"/><text x="34.5" y="18.5" font-family="Liberation Sans" font-size="3.5" font-weight="700" fill="#fff" fill-opacity="0.8" text-anchor="end">8,445</text><rect x="38" y="16.8" width="2.5" height="1.3" fill="#e04a6a" fill-opacity="0.5"/><rect x="5" y="22.2" width="16" height="0.9" fill="#fff" fill-opacity="0.3"/><text x="34.5" y="23.5" font-family="Liberation Sans" font-size="3.5" font-weight="700" fill="#fff" fill-opacity="0.8" text-anchor="end">81,265</text><rect x="38" y="21.8" width="2.5" height="1.3" fill="#e04a6a" fill-opacity="0.5"/><rect x="5" y="27.2" width="10" height="0.9" fill="#fff" fill-opacity="0.3"/><text x="34.5" y="28.5" font-family="Liberation Sans" font-size="3.5" font-weight="700" fill="#fff" fill-opacity="0.8" text-anchor="end">2,175</text><rect x="38" y="26.8" width="2.5" height="1.3" fill="#e04a6a" fill-opacity="0.5"/><rect x="5" y="32.2" width="13" height="0.9" fill="#fff" fill-opacity="0.3"/><text x="34.5" y="33.5" font-family="Liberation Sans" font-size="3.5" font-weight="700" fill="#fff" fill-opacity="0.8" text-anchor="end">45,785</text><rect x="38" y="31.8" width="2.5" height="1.3" fill="#e04a6a" fill-opacity="0.5"/><rect x="5" y="37.2" width="16" height="0.9" fill="#fff" fill-opacity="0.3"/><text x="34.5" y="38.5" font-family="Liberation Sans" font-size="3.5" font-weight="700" fill="#fff" fill-opacity="0.8" text-anchor="end">20,079</text><rect x="38" y="36.8" width="2.5" height="1.3" fill="#e04a6a" fill-opacity="0.5"/><text x="34" y="44.5" font-family="Liberation Sans" font-size="2.6" font-weight="400" fill="#fff" fill-opacity="0.45" text-anchor="end">98 / 125</text><rect x="17" y="48" width="20" height="0.8" fill="#fff" fill-opacity="0.18"/><rect x="5" y="51" width="36" height="0.6" fill="#fff" fill-opacity="0.12"/><path d="M48 15 L50 8 L52 14 L54 7 L56 14 L58 8 L60 15 L62 9 L64 16" fill="none" stroke="#fff" stroke-opacity="0.22" stroke-width="0.8"/><rect x="54" y="3" width="4" height="1.3" fill="#fff" fill-opacity="0.5"/><rect x="70" y="7" width="9" height="0.8" fill="#fff" fill-opacity="0.25"/><text x="70" y="11.5" font-family="Liberation Sans" font-size="3" font-weight="400" fill="#fff" fill-opacity="0.5" text-anchor="start">2,121</text><text x="73" y="20.5" font-family="Liberation Sans" font-size="3.3" font-weight="700" fill="#fff" fill-opacity="0.7" text-anchor="start">27/12</text><text x="70" y="24.5" font-family="Liberation Sans" font-size="3.3" font-weight="700" fill="#fff" fill-opacity="0.8" text-anchor="start">23,456</text><circle cx="55.5" cy="42" r="7.4" fill="none" stroke="#fff" stroke-opacity="0.88" stroke-width="2.8"/><text x="55.5" y="43.2" font-family="Liberation Sans" font-size="3" font-weight="700" fill="#fff" fill-opacity="0.75" text-anchor="middle">4,454</text><rect x="50" y="29.5" width="14" height="0.8" fill="#fff" fill-opacity="0.18"/><rect x="70" y="33.5" width="10" height="0.8" fill="#fff" fill-opacity="0.2"/><text x="71" y="40" font-family="Liberation Sans" font-size="4.4" font-weight="700" fill="#fff" fill-opacity="0.9" text-anchor="start">3.38</text><rect x="69" y="46" width="12" height="0.8" fill="#fff" fill-opacity="0.2"/><text x="69.5" y="53" font-family="Liberation Sans" font-size="3.3" font-weight="700" fill="#fff" fill-opacity="0.75" text-anchor="start">4m 30s</text><rect x="89" y="3.5" width="14" height="0.8" fill="#fff" fill-opacity="0.25"/><path d="M101.0 3.4 L101.69 5.05 L103.47 5.2 L102.11 6.36 L102.53 8.1 L101.0 7.17 L99.47 8.1 L99.89 6.36 L98.53 5.2 L100.31 5.05Z" fill="none" stroke="#fff" stroke-opacity="0.6" stroke-width="0.6"/><rect x="83" y="11.5" width="12" height="0.9" fill="#fff" fill-opacity="0.18"/><rect x="83" y="15.1" width="12" height="0.9" fill="#fff" fill-opacity="0.18"/><rect x="83" y="18.7" width="12" height="0.9" fill="#fff" fill-opacity="0.18"/><rect x="83" y="22.3" width="12" height="0.9" fill="#fff" fill-opacity="0.18"/><rect x="83" y="25.9" width="12" height="0.9" fill="#fff" fill-opacity="0.18"/><rect x="83" y="29.5" width="12" height="0.9" fill="#fff" fill-opacity="0.18"/><rect x="83" y="33.1" width="12" height="0.9" fill="#fff" fill-opacity="0.18"/><rect x="83" y="36.7" width="12" height="0.9" fill="#fff" fill-opacity="0.18"/><rect x="83" y="40.3" width="12" height="0.9" fill="#fff" fill-opacity="0.18"/><rect x="83" y="43.9" width="12" height="0.9" fill="#fff" fill-opacity="0.18"/><rect x="96" y="11.5" width="4" height="1" fill="#fff" fill-opacity="0.4"/><rect x="96" y="15.1" width="4" height="1" fill="#fff" fill-opacity="0.4"/><rect x="96" y="18.7" width="4" height="1" fill="#fff" fill-opacity="0.4"/><rect x="96" y="22.3" width="4" height="1" fill="#fff" fill-opacity="0.4"/><rect x="96" y="25.9" width="4" height="1" fill="#fff" fill-opacity="0.4"/><rect x="96" y="29.5" width="4" height="1" fill="#fff" fill-opacity="0.4"/><rect x="96" y="33.1" width="4" height="1" fill="#fff" fill-opacity="0.4"/><rect x="96" y="36.7" width="4" height="1" fill="#fff" fill-opacity="0.4"/><rect x="96" y="40.3" width="4" height="1" fill="#fff" fill-opacity="0.4"/><rect x="96" y="43.9" width="4" height="1" fill="#fff" fill-opacity="0.4"/><rect x="101.5" y="11.5" width="2" height="1" fill="#e04a6a" fill-opacity="0.35"/><rect x="101.5" y="15.1" width="2" height="1" fill="#e04a6a" fill-opacity="0.35"/><rect x="101.5" y="18.7" width="2" height="1" fill="#e04a6a" fill-opacity="0.35"/><rect x="101.5" y="22.3" width="2" height="1" fill="#e04a6a" fill-opacity="0.35"/><rect x="101.5" y="25.9" width="2" height="1" fill="#e04a6a" fill-opacity="0.35"/><rect x="101.5" y="29.5" width="2" height="1" fill="#e04a6a" fill-opacity="0.35"/><rect x="101.5" y="33.1" width="2" height="1" fill="#e04a6a" fill-opacity="0.35"/><rect x="101.5" y="36.7" width="2" height="1" fill="#e04a6a" fill-opacity="0.35"/><rect x="101.5" y="40.3" width="2" height="1" fill="#e04a6a" fill-opacity="0.35"/><rect x="101.5" y="43.9" width="2" height="1" fill="#e04a6a" fill-opacity="0.35"/><rect x="83" y="47" width="22" height="0.8" fill="#fff" fill-opacity="0.18"/><rect x="86" y="51" width="18" height="0.8" fill="#fff" fill-opacity="0.18"/></g></svg></div>
  <div class="av"><svg><use href="#avs"/></svg></div>
  <div class="ct">Google Analytics Template 1</div>
  <div class="cs">My Website, Default</div>
  <div class="cf" style="top:109px"><span class="chk"></span>an hour ago</div>
</div>
<div class="card" style="left:326px;top:260px">
  <div class="thumb"><svg width="111" height="62" viewBox="0 0 111 62" style="display:block"><rect width="111" height="62" fill="#5d626b"/><rect width="111" height="62" fill="url(#sheen)" opacity="0.2"/><g><path d="M2 0 L2 62" stroke="#fff" stroke-opacity="0.04" stroke-width="0.35"/><path d="M5.5 0 L5.5 62" stroke="#fff" stroke-opacity="0.04" stroke-width="0.35"/><path d="M9.0 0 L9.0 62" stroke="#fff" stroke-opacity="0.04" stroke-width="0.35"/><path d="M12.5 0 L12.5 62" stroke="#fff" stroke-opacity="0.04" stroke-width="0.35"/><path d="M16.0 0 L16.0 62" stroke="#fff" stroke-opacity="0.04" stroke-width="0.35"/><path d="M19.5 0 L19.5 62" stroke="#fff" stroke-opacity="0.04" stroke-width="0.35"/><path d="M23.0 0 L23.0 62" stroke="#fff" stroke-opacity="0.04" stroke-width="0.35"/><path d="M26.5 0 L26.5 62" stroke="#fff" stroke-opacity="0.04" stroke-width="0.35"/><path d="M30.0 0 L30.0 62" stroke="#fff" stroke-opacity="0.04" stroke-width="0.35"/><path d="M33.5 0 L33.5 62" stroke="#fff" stroke-opacity="0.04" stroke-width="0.35"/><path d="M37.0 0 L37.0 62" stroke="#fff" stroke-opacity="0.04" stroke-width="0.35"/><path d="M40.5 0 L40.5 62" stroke="#fff" stroke-opacity="0.04" stroke-width="0.35"/><path d="M44.0 0 L44.0 62" stroke="#fff" stroke-opacity="0.04" stroke-width="0.35"/><path d="M47.5 0 L47.5 62" stroke="#fff" stroke-opacity="0.04" stroke-width="0.35"/><path d="M51.0 0 L51.0 62" stroke="#fff" stroke-opacity="0.04" stroke-width="0.35"/><path d="M54.5 0 L54.5 62" stroke="#fff" stroke-opacity="0.04" stroke-width="0.35"/><path d="M58.0 0 L58.0 62" stroke="#fff" stroke-opacity="0.04" stroke-width="0.35"/><path d="M61.5 0 L61.5 62" stroke="#fff" stroke-opacity="0.04" stroke-width="0.35"/><path d="M65.0 0 L65.0 62" stroke="#fff" stroke-opacity="0.04" stroke-width="0.35"/><path d="M68.5 0 L68.5 62" stroke="#fff" stroke-opacity="0.04" stroke-width="0.35"/><path d="M72.0 0 L72.0 62" stroke="#fff" stroke-opacity="0.04" stroke-width="0.35"/><path d="M75.5 0 L75.5 62" stroke="#fff" stroke-opacity="0.04" stroke-width="0.35"/><path d="M79.0 0 L79.0 62" stroke="#fff" stroke-opacity="0.04" stroke-width="0.35"/><path d="M82.5 0 L82.5 62" stroke="#fff" stroke-opacity="0.04" stroke-width="0.35"/><path d="M86.0 0 L86.0 62" stroke="#fff" stroke-opacity="0.04" stroke-width="0.35"/><path d="M89.5 0 L89.5 62" stroke="#fff" stroke-opacity="0.04" stroke-width="0.35"/><path d="M93.0 0 L93.0 62" stroke="#fff" stroke-opacity="0.04" stroke-width="0.35"/><path d="M96.5 0 L96.5 62" stroke="#fff" stroke-opacity="0.04" stroke-width="0.35"/><path d="M100.0 0 L100.0 62" stroke="#fff" stroke-opacity="0.04" stroke-width="0.35"/><path d="M103.5 0 L103.5 62" stroke="#fff" stroke-opacity="0.04" stroke-width="0.35"/><path d="M107.0 0 L107.0 62" stroke="#fff" stroke-opacity="0.04" stroke-width="0.35"/><path d="M110.5 0 L110.5 62" stroke="#fff" stroke-opacity="0.04" stroke-width="0.35"/><rect x="0.8" y="0.8" width="109.4" height="60.4" fill="none" stroke="#fff" stroke-opacity="0.12" stroke-width="0.6"/><rect x="0" y="59" width="111" height="3" fill="#000" fill-opacity="0.1"/><rect x="7.699999999999999" y="3" width="18" height="0.8" fill="#fff" fill-opacity="0.25"/><circle cx="16.7" cy="13.7" r="6.3" fill="none" stroke="#fff" stroke-opacity="0.8" stroke-width="2.5"/><text x="16.7" y="14.8" font-family="Liberation Sans" font-size="3" font-weight="700" fill="#fff" fill-opacity="0.75" text-anchor="middle">235</text><rect x="6.699999999999999" y="24.5" width="20" height="0.7" fill="#fff" fill-opacity="0.18"/><rect x="10.7" y="27.5" width="12" height="0.7" fill="#fff" fill-opacity="0.16"/><rect x="11.7" y="32" width="10" height="0.8" fill="#fff" fill-opacity="0.25"/><rect x="33.3" y="3" width="18" height="0.8" fill="#fff" fill-opacity="0.25"/><circle cx="42.3" cy="13.7" r="6.3" fill="none" stroke="#fff" stroke-opacity="0.8" stroke-width="2.5"/><text x="42.3" y="14.8" font-family="Liberation Sans" font-size="3" font-weight="700" fill="#fff" fill-opacity="0.75" text-anchor="middle">148</text><rect x="32.3" y="24.5" width="20" height="0.7" fill="#fff" fill-opacity="0.18"/><rect x="36.3" y="27.5" width="12" height="0.7" fill="#fff" fill-opacity="0.16"/><rect x="37.3" y="32" width="10" height="0.8" fill="#fff" fill-opacity="0.25"/><rect x="58.900000000000006" y="3" width="18" height="0.8" fill="#fff" fill-opacity="0.25"/><circle cx="67.9" cy="13.7" r="6.3" fill="none" stroke="#fff" stroke-opacity="0.8" stroke-width="2.5"/><text x="67.9" y="14.8" font-family="Liberation Sans" font-size="3" font-weight="700" fill="#fff" fill-opacity="0.75" text-anchor="middle">1,504</text><rect x="57.900000000000006" y="24.5" width="20" height="0.7" fill="#fff" fill-opacity="0.18"/><rect x="61.900000000000006" y="27.5" width="12" height="0.7" fill="#fff" fill-opacity="0.16"/><rect x="62.900000000000006" y="32" width="10" height="0.8" fill="#fff" fill-opacity="0.25"/><rect x="84.8" y="3" width="18" height="0.8" fill="#fff" fill-opacity="0.25"/><circle cx="93.8" cy="13.7" r="6.3" fill="none" stroke="#fff" stroke-opacity="0.8" stroke-width="2.5"/><text x="93.8" y="14.8" font-family="Liberation Sans" font-size="3" font-weight="700" fill="#fff" fill-opacity="0.75" text-anchor="middle">9</text><rect x="83.8" y="24.5" width="20" height="0.7" fill="#fff" fill-opacity="0.18"/><rect x="87.8" y="27.5" width="12" height="0.7" fill="#fff" fill-opacity="0.16"/><rect x="88.8" y="32" width="10" height="0.8" fill="#fff" fill-opacity="0.25"/><path d="M30 2 L30 58" stroke="#fff" stroke-opacity="0.1" stroke-width="0.5"/><path d="M56 2 L56 58" stroke="#fff" stroke-opacity="0.1" stroke-width="0.5"/><path d="M82 2 L82 58" stroke="#fff" stroke-opacity="0.1" stroke-width="0.5"/><path d="M3 29.5 L108 29.5" stroke="#fff" stroke-opacity="0.1" stroke-width="0.5"/><rect x="5" y="38.0" width="20" height="0.9" fill="#fff" fill-opacity="0.2"/><rect x="5" y="43.3" width="20" height="0.9" fill="#fff" fill-opacity="0.2"/><rect x="5" y="48.6" width="20" height="0.9" fill="#fff" fill-opacity="0.2"/><rect x="5" y="53.9" width="20" height="0.9" fill="#fff" fill-opacity="0.2"/><rect x="26" y="38.0" width="2" height="1" fill="#fff" fill-opacity="0.35"/><rect x="26" y="43.3" width="2" height="1" fill="#fff" fill-opacity="0.35"/><rect x="26" y="48.6" width="2" height="1" fill="#fff" fill-opacity="0.35"/><rect x="26" y="53.9" width="2" height="1" fill="#fff" fill-opacity="0.35"/><rect x="33" y="38.0" width="12" height="0.9" fill="#fff" fill-opacity="0.2"/><rect x="33" y="43.3" width="12" height="0.9" fill="#fff" fill-opacity="0.2"/><rect x="33" y="48.6" width="12" height="0.9" fill="#fff" fill-opacity="0.2"/><rect x="33" y="53.9" width="12" height="0.9" fill="#fff" fill-opacity="0.2"/><rect x="50" y="38.0" width="3" height="1" fill="#fff" fill-opacity="0.35"/><rect x="50" y="43.3" width="3" height="1" fill="#fff" fill-opacity="0.35"/><rect x="50" y="48.6" width="3" height="1" fill="#fff" fill-opacity="0.35"/><rect x="50" y="53.9" width="3" height="1" fill="#fff" fill-opacity="0.35"/><rect x="59" y="38.0" width="12" height="0.9" fill="#fff" fill-opacity="0.2"/><rect x="59" y="43.3" width="12" height="0.9" fill="#fff" fill-opacity="0.2"/><rect x="59" y="48.6" width="12" height="0.9" fill="#fff" fill-opacity="0.2"/><rect x="59" y="53.9" width="12" height="0.9" fill="#fff" fill-opacity="0.2"/><rect x="74" y="38.0" width="6" height="1.1" fill="#fff" fill-opacity="0.35"/><rect x="74" y="43.3" width="6" height="1.1" fill="#fff" fill-opacity="0.35"/><rect x="74" y="48.6" width="6" height="1.1" fill="#fff" fill-opacity="0.35"/><rect x="74" y="53.9" width="6" height="1.1" fill="#fff" fill-opacity="0.35"/><rect x="85" y="38.0" width="15" height="0.9" fill="#fff" fill-opacity="0.2"/><rect x="85" y="43.3" width="15" height="0.9" fill="#fff" fill-opacity="0.2"/><rect x="85" y="48.6" width="15" height="0.9" fill="#fff" fill-opacity="0.2"/><rect x="85" y="53.9" width="15" height="0.9" fill="#fff" fill-opacity="0.2"/><rect x="103" y="38.0" width="2" height="1" fill="#fff" fill-opacity="0.35"/><rect x="103" y="43.3" width="2" height="1" fill="#fff" fill-opacity="0.35"/><rect x="103" y="48.6" width="2" height="1" fill="#fff" fill-opacity="0.35"/><rect x="103" y="53.9" width="2" height="1" fill="#fff" fill-opacity="0.35"/><rect x="100" y="3" width="4" height="4" fill="#fff" fill-opacity="0.3"/></g></svg></div>
  <div class="av"><svg><use href="#avs"/></svg></div>
  <div class="ct">Organic Blog Traffic Template</div>
  <div class="cs">Pezera Blog</div>
  <div class="cf" style="top:109px"><span class="chk"></span>7 minutes ago</div>
</div>

<!-- sidebar -->
<div class="t" style="left:462.5px;top:95.0px;font-size:5.8px;color:#9a9a9a">Customize Insights Activity</div>
<div class="a" style="left:461px;top:104.2px;width:91px;height:1px;background:#f0f0f0"></div>
<svg class="a" style="left:463.5px;top:110.5px" width="7" height="6" viewBox="0 0 7 6"><path d="M1 3.2 L2.6 4.8 L6 1.2" fill="none" stroke="#7cc142" stroke-width="1.3"/></svg>
<div class="t" style="left:473.5px;top:112.0px;font-size:5.75px;color:#333">Activity from my clients</div>
<div class="a" style="left:461px;top:122.5px;width:91px;height:1px;background:#f0f0f0"></div>
<div class="t" style="left:462.5px;top:130.65px;font-size:5px;color:#a5a5a5">DATA INSIGHTS</div>
<svg class="a" style="left:463.5px;top:141.3px" width="7" height="6" viewBox="0 0 7 6"><path d="M1 3.2 L2.6 4.8 L6 1.2" fill="none" stroke="#7cc142" stroke-width="1.3"/></svg>
<div class="t" style="left:473.5px;top:142.8px;font-size:5.75px;color:#333">Alerts</div>
<svg class="a" style="left:463.5px;top:153.8px" width="7" height="6" viewBox="0 0 7 6"><path d="M1 3.2 L2.6 4.8 L6 1.2" fill="none" stroke="#7cc142" stroke-width="1.3"/></svg>
<div class="t" style="left:473.5px;top:155.3px;font-size:5.75px;color:#333">Scorecards</div>
<svg class="a" style="left:463.5px;top:166.4px" width="7" height="6" viewBox="0 0 7 6"><path d="M1 3.2 L2.6 4.8 L6 1.2" fill="none" stroke="#7cc142" stroke-width="1.3"/></svg>
<div class="t" style="left:473.5px;top:167.9px;font-size:5.75px;color:#333">Weekly Summaries</div>
<svg class="a" style="left:463.5px;top:178.6px" width="7" height="6" viewBox="0 0 7 6"><path d="M1 3.2 L2.6 4.8 L6 1.2" fill="none" stroke="#7cc142" stroke-width="1.3"/></svg>
<div class="t" style="left:473.5px;top:180.1px;font-size:5.75px;color:#333">Goals</div>
<svg class="a" style="left:463.5px;top:191.1px" width="7" height="6" viewBox="0 0 7 6"><path d="M1 3.2 L2.6 4.8 L6 1.2" fill="none" stroke="#7cc142" stroke-width="1.3"/></svg>
<div class="t" style="left:473.5px;top:192.6px;font-size:5.75px;color:#333">Annotations</div>
<div class="a" style="left:461px;top:203.5px;width:91px;height:1px;background:#f0f0f0"></div>
<div class="t" style="left:462.5px;top:211.05px;font-size:5px;color:#a5a5a5">ACCOUNT ACTIVITY</div>
<svg class="a" style="left:463.5px;top:222.2px" width="7" height="6" viewBox="0 0 7 6"><path d="M1 3.2 L2.6 4.8 L6 1.2" fill="none" stroke="#7cc142" stroke-width="1.3"/></svg>
<div class="t" style="left:473.5px;top:223.7px;font-size:5.75px;color:#333">New users</div>
<svg class="a" style="left:463.5px;top:234.1px" width="7" height="6" viewBox="0 0 7 6"><path d="M1 3.2 L2.6 4.8 L6 1.2" fill="none" stroke="#7cc142" stroke-width="1.3"/></svg>
<div class="t" style="left:473.5px;top:235.6px;font-size:5.75px;color:#333">New Databoards</div>
<svg class="a" style="left:463.5px;top:246.8px" width="7" height="6" viewBox="0 0 7 6"><path d="M1 3.2 L2.6 4.8 L6 1.2" fill="none" stroke="#7cc142" stroke-width="1.3"/></svg>
<div class="t" style="left:473.5px;top:248.3px;font-size:5.75px;color:#333">New connections</div>
<svg class="a" style="left:463.5px;top:259.1px" width="7" height="6" viewBox="0 0 7 6"><path d="M1 3.2 L2.6 4.8 L6 1.2" fill="none" stroke="#7cc142" stroke-width="1.3"/></svg>
<div class="t" style="left:473.5px;top:260.6px;font-size:5.75px;color:#333">New snapshots</div>
<div class="a" style="left:461px;top:271.1px;width:91px;height:1px;background:#f0f0f0"></div>
<div class="t" style="left:462.5px;top:279.05px;font-size:5px;color:#a5a5a5">RECOMMENDATIONS</div>
<svg class="a" style="left:463.5px;top:290.5px" width="7" height="6" viewBox="0 0 7 6"><path d="M1 3.2 L2.6 4.8 L6 1.2" fill="none" stroke="#7cc142" stroke-width="1.3"/></svg>
<div class="t" style="left:473.5px;top:292.0px;font-size:5.75px;color:#333">Template updates</div>
<svg class="a" style="left:463.5px;top:302.5px" width="7" height="6" viewBox="0 0 7 6"><path d="M1 3.2 L2.6 4.8 L6 1.2" fill="none" stroke="#7cc142" stroke-width="1.3"/></svg>
<div class="t" style="left:473.5px;top:304.0px;font-size:5.75px;color:#333">Educational content</div>
<svg class="a" style="left:463.5px;top:314.8px" width="7" height="6" viewBox="0 0 7 6"><path d="M1 3.2 L2.6 4.8 L6 1.2" fill="none" stroke="#7cc142" stroke-width="1.3"/></svg>
<div class="t" style="left:473.5px;top:316.3px;font-size:5.75px;color:#333">Connector releases</div>
<div class="a" style="left:461px;top:326.9px;width:91px;height:1px;background:#f0f0f0"></div>
<div class="t" style="left:462.7px;top:338.3px;font-size:4.8px;color:#8cc152">Apply</div>
<div class="t" style="left:480.7px;top:338.3px;font-size:4.8px;color:#aaa">Cancel</div>
</body></html>
